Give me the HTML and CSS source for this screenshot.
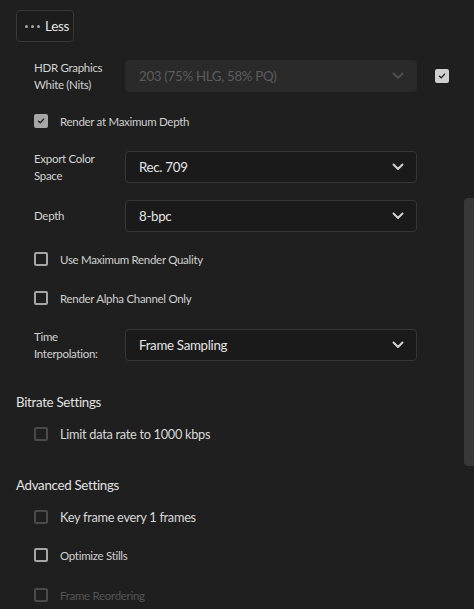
FILE: index.html
```html
<!DOCTYPE html>
<html>
<head>
<meta charset="utf-8">
<link rel="stylesheet" href="styles.css">
</head>
<body>
<div class="panel">
  <button class="less-btn"><span class="dots"><i></i><i></i><i></i></span><span>Less</span></button>

  <div class="field r-hdr">
    <div class="label">HDR Graphics<br>White (Nits)</div>
    <div class="select disabled"><span>203 (75% HLG, 58% PQ)</span><svg class="chev" viewBox="0 0 12 8"><path d="M1.5 1.5 L6 6 L10.5 1.5"/></svg></div>
    <span class="cb checked light"><svg viewBox="0 0 14 14"><path d="M3.5 7.2 L6 9.6 L10.6 4.4"/></svg></span>
  </div>

  <div class="check r-max"><span class="cb checked"><svg viewBox="0 0 14 14"><path d="M3.5 7.2 L6 9.6 L10.6 4.4"/></svg></span><span class="ctext">Render at Maximum Depth</span></div>

  <div class="field r-ecs">
    <div class="label">Export Color<br>Space</div>
    <div class="select"><span>Rec. 709</span><svg class="chev" viewBox="0 0 12 8"><path d="M1.5 1.5 L6 6 L10.5 1.5"/></svg></div>
  </div>

  <div class="field r-depth">
    <div class="label">Depth</div>
    <div class="select"><span>8-bpc</span><svg class="chev" viewBox="0 0 12 8"><path d="M1.5 1.5 L6 6 L10.5 1.5"/></svg></div>
  </div>

  <div class="check r-umrq"><span class="cb"></span><span class="ctext">Use Maximum Render Quality</span></div>
  <div class="check r-alpha"><span class="cb"></span><span class="ctext">Render Alpha Channel Only</span></div>

  <div class="field r-time">
    <div class="label">Time<br>Interpolation:</div>
    <div class="select"><span>Frame Sampling</span><svg class="chev" viewBox="0 0 12 8"><path d="M1.5 1.5 L6 6 L10.5 1.5"/></svg></div>
  </div>

  <div class="heading r-bitrate">Bitrate Settings</div>
  <div class="check r-limit"><span class="cb dim"></span><span class="ctext big">Limit data rate to 1000 kbps</span></div>

  <div class="heading r-adv">Advanced Settings</div>
  <div class="check r-key"><span class="cb dim"></span><span class="ctext big">Key frame every 1 frames</span></div>
  <div class="check r-opt"><span class="cb"></span><span class="ctext">Optimize Stills</span></div>
  <div class="check r-reorder"><span class="cb dim"></span><span class="ctext faded">Frame Reordering</span></div>
</div>
<div class="scroll-thumb"></div>
</body>
</html>
```

FILE: styles.css
```css
html, body {
  margin: 0;
  padding: 0;
  background: #1f1f1f;
  height: 100%;
  overflow: hidden;
}
body {
  font-family: "Lato", "Liberation Sans", sans-serif;
  color: #d4d4d4;
}
.panel {
  display: flex;
  flex-direction: column;
  padding: 10px 16px 0 16px;
}
.less-btn {
  align-self: flex-start;
  display: flex;
  align-items: center;
  gap: 5px;
  height: 32px;
  width: 58px;
  box-sizing: border-box;
  padding: 0 0 0 8px;
  background: #1c1c1c;
  border: 1px solid #383838;
  border-radius: 4px;
  color: #e2e2e2;
  font-family: inherit;
  font-size: 13.5px;
  letter-spacing: -0.3px;
}
.dots {
  display: flex;
  gap: 3px;
}
.dots i {
  width: 3px;
  height: 3px;
  border-radius: 50%;
  background: #a8a8a8;
}
.field {
  display: flex;
  align-items: center;
  height: 32px;
  padding-left: 18px;
}
.label {
  width: 91px;
  flex: none;
  font-size: 11.5px;
  letter-spacing: -0.3px;
  line-height: 17.5px;
  color: #d2d2d2;
}
.select {
  width: 292px;
  height: 32px;
  box-sizing: border-box;
  flex: none;
  display: flex;
  align-items: center;
  justify-content: space-between;
  padding: 0 12px 0 13px;
  background: #1a1a1a;
  border: 1px solid #363636;
  border-radius: 4px;
  font-size: 13.3px;
  letter-spacing: -0.3px;
  color: #e4e4e4;
}
.select.disabled {
  background: #2a2a2a;
  border-color: #2a2a2a;
  color: #5c5c5c;
}
.chev {
  width: 12px;
  height: 8px;
  fill: none;
  stroke: #d0d0d0;
  stroke-width: 2;
  stroke-linecap: round;
  stroke-linejoin: round;
}
.select.disabled .chev {
  stroke: #4e4e4e;
}
.cb {
  width: 14px;
  height: 14px;
  box-sizing: border-box;
  flex: none;
  border: 2px solid #a6a6a6;
  border-radius: 2px;
  display: flex;
  align-items: center;
  justify-content: center;
}
.cb svg {
  width: 14px;
  height: 14px;
  fill: none;
  stroke: #1e1e1e;
  stroke-width: 2;
  stroke-linecap: round;
  stroke-linejoin: round;
}
.cb.checked {
  background: #a6a6a6;
}
.cb.light {
  background: #cfcfcf;
  border-color: #cfcfcf;
  margin-left: 18px;
}
.cb.dim {
  border-color: #4a4a4a;
}
.check {
  display: flex;
  align-items: center;
  gap: 12px;
  height: 20px;
  padding-left: 18px;
}
.ctext {
  font-size: 11.5px;
  letter-spacing: -0.3px;
  color: #d0d0d0;
}
.ctext.big {
  font-size: 12.8px;
  color: #d8d8d8;
}
.ctext.faded {
  color: #555;
}
.heading {
  height: 20px;
  display: flex;
  align-items: center;
  font-size: 13.3px;
  letter-spacing: -0.3px;
  color: #e2e2e2;
}
.r-hdr { margin-top: 18px; }
.r-max { margin-top: 19px; }
.r-ecs { margin-top: 20px; }
.r-depth { margin-top: 17px; }
.r-umrq { margin-top: 17px; }
.r-alpha { margin-top: 19px; }
.r-time { margin-top: 21px; }
.r-bitrate { margin-top: 31px; }
.r-limit { margin-top: 12px; }
.r-adv { margin-top: 31px; }
.r-key { margin-top: 12px; }
.r-opt { margin-top: 18px; }
.r-reorder { margin-top: 20px; }
.scroll-thumb {
  position: absolute;
  left: 464px;
  top: 198px;
  width: 14px;
  height: 268px;
  background: #383838;
  border-radius: 4px;
}
```
